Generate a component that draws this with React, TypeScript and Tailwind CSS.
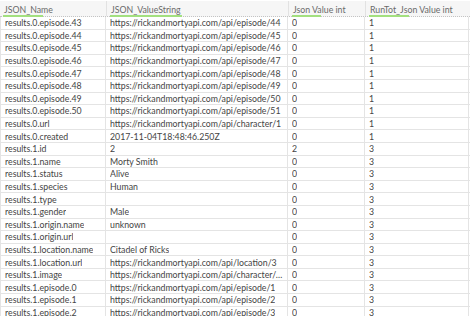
const base = 'https://rickandmortyapi.com/api/';

const rows: [string, string, string, string][] = [
  ['results.0.episode.43', base + 'episode/44', '0', '1'],
  ['results.0.episode.44', base + 'episode/45', '0', '1'],
  ['results.0.episode.45', base + 'episode/46', '0', '1'],
  ['results.0.episode.46', base + 'episode/47', '0', '1'],
  ['results.0.episode.47', base + 'episode/48', '0', '1'],
  ['results.0.episode.48', base + 'episode/49', '0', '1'],
  ['results.0.episode.49', base + 'episode/50', '0', '1'],
  ['results.0.episode.50', base + 'episode/51', '0', '1'],
  ['results.0.url', base + 'character/1', '0', '1'],
  ['results.0.created', '2017-11-04T18:48:46.250Z', '0', '1'],
  ['results.1.id', '2', '2', '3'],
  ['results.1.name', 'Morty Smith', '0', '3'],
  ['results.1.status', 'Alive', '0', '3'],
  ['results.1.species', 'Human', '0', '3'],
  ['results.1.type', '', '0', '3'],
  ['results.1.gender', 'Male', '0', '3'],
  ['results.1.origin.name', 'unknown', '0', '3'],
  ['results.1.origin.url', '', '0', '3'],
  ['results.1.location.name', 'Citadel of Ricks', '0', '3'],
  ['results.1.location.url', base + 'location/3', '0', '3'],
  ['results.1.image', base + 'character/avatar/2.jpeg', '0', '3'],
  ['results.1.episode.0', base + 'episode/1', '0', '3'],
  ['results.1.episode.1', base + 'episode/2', '0', '3'],
  ['results.1.episode.2', base + 'episode/3', '0', '3'],
];

const headers = [
  { label: 'JSON_Name', w: 'w-[106px]', bar: 'w-[40px]' },
  { label: 'JSON_ValueString', w: 'w-[182px]', bar: 'w-[72px]' },
  { label: 'Json Value int', w: 'w-[77px]', bar: 'w-[29px]' },
  { label: 'RunTot_Json Value int', w: 'w-[104px]', bar: 'w-[40px]' },
];

export default function App() {
  return (
    <div className="w-[474px] h-[316px] overflow-hidden bg-white text-[8.75px] text-[#444] font-['Lato',sans-serif]">
      <div className="w-[470px] pt-[1px]">
        <div className="flex h-[16px] bg-[#f6f6f6] border-b border-dotted border-[#c4c4c4]">
          {headers.map((h, i) => (
            <div key={i} className={`${h.w} shrink-0 relative flex items-center pl-[4px] pt-[2px] text-[#6a6a6a] ${i > 0 ? 'border-l border-[#e2e2e2]' : ''}`}>
              <span className="whitespace-nowrap leading-[11px]">{h.label}</span>
              <div className={`absolute left-[3px] bottom-[-1px] h-[2px] bg-[#a3e07f] ${h.bar}`} />
            </div>
          ))}
        </div>
        {rows.map((r, i) => (
          <div key={i} className="flex h-[12.6px] border-b border-[#e4e4e4]">
            {r.map((c, j) => (
              <div key={j} className={`${headers[j].w} shrink-0 flex items-center pl-[4px] pr-[2px] border-r border-[#e4e4e4] ${j === 0 ? 'border-l' : ''}`}>
                <span className="truncate leading-[11px]">{c}</span>
              </div>
            ))}
          </div>
        ))}
      </div>
    </div>
  );
}
